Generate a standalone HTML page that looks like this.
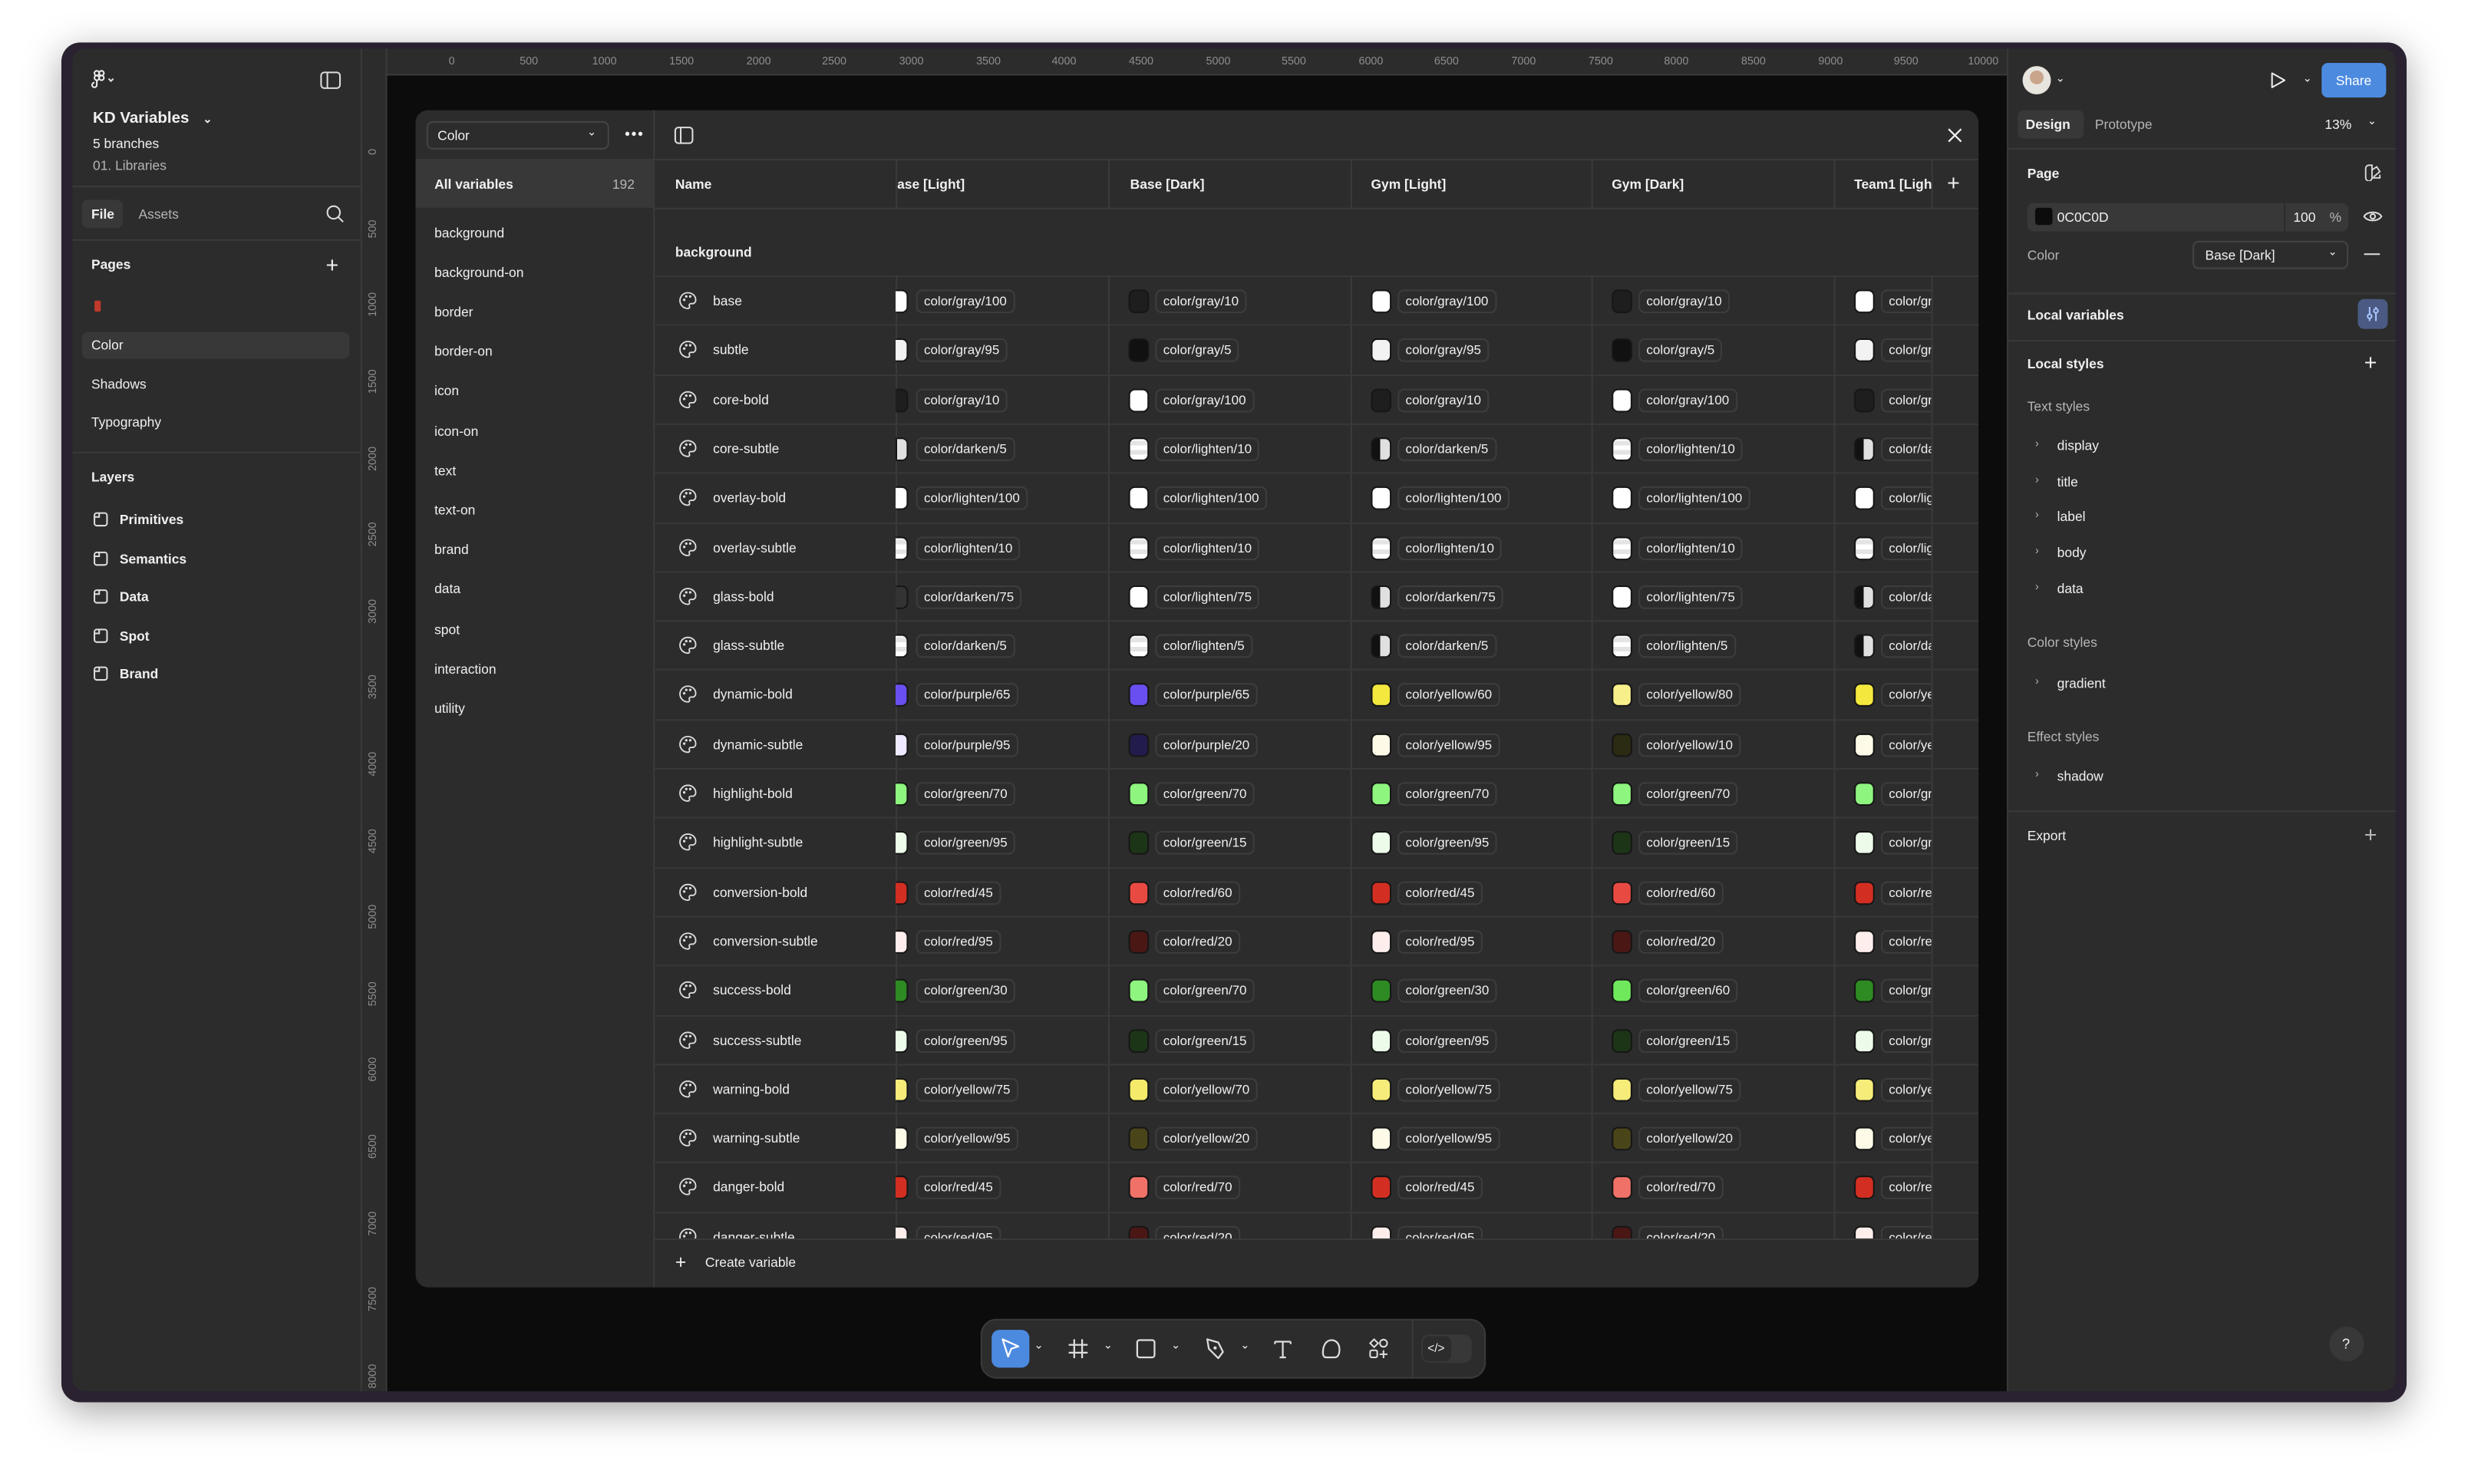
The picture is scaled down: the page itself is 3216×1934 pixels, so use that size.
<!DOCTYPE html>
<html><head><meta charset="utf-8">
<style>
*{margin:0;padding:0;box-sizing:border-box}
html,body{width:3216px;height:1934px;overflow:hidden;background:#fff}
#st{position:absolute;left:0;top:0;width:1568px;height:943px;transform:scale(2.05102);transform-origin:0 0;font-family:"Liberation Sans",sans-serif;color:#f0f0f0;font-size:8.5px}
.a{position:absolute}
.t{position:absolute;white-space:nowrap;line-height:10px;transform:translateY(-5px)}
.b{font-weight:bold}
.g{color:#b5b5b5}
.win{left:39px;top:27px;width:1490px;height:864px;background:#2a2230;border-radius:12px;box-shadow:0 6px 24px rgba(0,0,0,.35)}
.pan{background:#2c2c2c}
.sep{position:absolute;height:1px;background:#3a3a3a}
.rh{position:absolute;top:0;font-size:7px;color:#8d8d8d;transform:translateX(-50%);line-height:17px}
.rv{position:absolute;left:229px;width:17px;font-size:7px;color:#8d8d8d;text-align:center}
.rv span{display:block;transform:rotate(-90deg);white-space:nowrap}
#md{left:264px;top:70px;width:993px;height:748px;background:#2c2c2c;border-radius:8px;overflow:hidden}
.vl{position:absolute;top:105px;width:1px;height:612px;background:#3a3a3a}
.vh{position:absolute;top:31px;width:1px;height:31px;background:#3a3a3a}
.r{position:absolute;left:152px;width:841px;height:31.3px;border-top:1px solid #383838}
.r .n{position:absolute;left:37px;top:15px;transform:translateY(-5px);line-height:10px}
.r svg.p{position:absolute;left:15px;top:9px}
.c{position:absolute;top:0;height:31px;overflow:hidden}
.c1{left:153px;width:135px}.c2{left:288px;width:154px}.c3{left:442px;width:153px}.c4{left:595px;width:154px}.c5{left:749px;width:62px}
.c b{position:absolute;left:14px;top:9px;width:11px;height:13px;border-radius:3px;box-shadow:0 0 0 1px rgba(0,0,0,.5)}
.c u{position:absolute;left:30px;top:8px;height:15px;padding:0 4px;border:1px solid #3d3d3d;border-radius:4px;text-decoration:none;line-height:13px;white-space:nowrap;font-size:8.3px}
.c1 b{left:-4px}.c1 u{left:13px}
.dk{background:linear-gradient(90deg,#111 45%,#e0e0e0 45%)!important}
.lt{background:repeating-linear-gradient(0deg,#fff 0 3px,#e4e4e4 3px 6px)!important}
.li{position:absolute;left:12px;font-size:8.5px;line-height:10px;transform:translateY(-5px)}
.lay svg{position:absolute;left:59px}
</style></head><body>
<div id="st">
<div class="a win"></div>
<!-- left panel -->
<div class="a pan" style="left:46px;top:31px;width:183px;height:853px;border-radius:8px 0 0 8px"></div>
<svg class="a" style="left:58px;top:44px" width="16" height="14" viewBox="0 0 16 14"><g fill="none" stroke="#eee" stroke-width="1"><rect x="2" y="1" width="3" height="3" rx="1.5"/><rect x="5" y="1" width="3" height="3" rx="1.5"/><circle cx="3.5" cy="5.5" r="1.5"/><circle cx="6.5" cy="5.5" r="1.5"/><path d="M3.5 7v3a1.5 1.5 0 1 1-1.5-1.5"/></g><path d="M11 6l1.5 1.5L14 6" stroke="#ddd" fill="none"/></svg>
<svg class="a" style="left:203px;top:45px" width="14" height="12"><rect x="1" y="1" width="12" height="10" rx="2" fill="none" stroke="#ddd"/><line x1="5" y1="1" x2="5" y2="11" stroke="#ddd"/></svg>
<div class="t b" style="left:59px;top:76px;font-size:10px">KD Variables <span style="font-size:7px;margin-left:6px">⌄</span></div>
<div class="t" style="left:59px;top:91px">5 branches</div>
<div class="t g" style="left:59px;top:105px">01. Libraries</div>
<div class="sep" style="left:46px;top:118px;width:183px"></div>
<div class="a" style="left:52px;top:127px;width:26px;height:18px;background:#383838;border-radius:4px"></div>
<div class="t b" style="left:58px;top:136px">File</div>
<div class="t g" style="left:88px;top:136px">Assets</div>
<svg class="a" style="left:207px;top:130px" width="12" height="12"><circle cx="5" cy="5" r="4" fill="none" stroke="#ddd"/><line x1="8" y1="8" x2="11" y2="11" stroke="#ddd"/></svg>
<div class="sep" style="left:46px;top:152px;width:183px"></div>
<div class="t b" style="left:58px;top:168px">Pages</div>
<div class="t" style="left:207px;top:168px;font-size:14px">+</div>
<div class="a" style="left:60px;top:191px;width:4px;height:7px;background:#c0392b;border-radius:1px"></div>
<div class="a" style="left:52px;top:211px;width:170px;height:17px;background:#383838;border-radius:4px"></div>
<div class="t" style="left:58px;top:219px">Color</div>
<div class="t" style="left:58px;top:244px">Shadows</div>
<div class="t" style="left:58px;top:268px">Typography</div>
<div class="sep" style="left:46px;top:287px;width:183px"></div>
<div class="t b" style="left:58px;top:303px">Layers</div>
<div class="lay">
<svg style="top:325px" width="10" height="10"><rect x="1" y="1" width="8" height="8" rx="1.5" fill="none" stroke="#ddd"/><path d="M1 3.5h3V1" fill="none" stroke="#ddd"/></svg>
<svg style="top:350px" width="10" height="10"><rect x="1" y="1" width="8" height="8" rx="1.5" fill="none" stroke="#ddd"/><path d="M1 3.5h3V1" fill="none" stroke="#ddd"/></svg>
<svg style="top:374px" width="10" height="10"><rect x="1" y="1" width="8" height="8" rx="1.5" fill="none" stroke="#ddd"/><path d="M1 3.5h3V1" fill="none" stroke="#ddd"/></svg>
<svg style="top:399px" width="10" height="10"><rect x="1" y="1" width="8" height="8" rx="1.5" fill="none" stroke="#ddd"/><path d="M1 3.5h3V1" fill="none" stroke="#ddd"/></svg>
<svg style="top:423px" width="10" height="10"><rect x="1" y="1" width="8" height="8" rx="1.5" fill="none" stroke="#ddd"/><path d="M1 3.5h3V1" fill="none" stroke="#ddd"/></svg>
</div>
<div class="t b" style="left:76px;top:330px">Primitives</div>
<div class="t b" style="left:76px;top:355px">Semantics</div>
<div class="t b" style="left:76px;top:379px">Data</div>
<div class="t b" style="left:76px;top:404px">Spot</div>
<div class="t b" style="left:76px;top:428px">Brand</div>

<!-- rulers & canvas -->
<div class="a pan" style="left:229px;top:31px;width:1046px;height:17px;border-bottom:1px solid #3a3a3a"></div>
<div class="a pan" style="left:229px;top:31px;width:17px;height:853px;border-right:1px solid #3a3a3a;border-left:1px solid #3a3a3a"></div>
<div class="a" style="left:246px;top:48px;width:1029px;height:836px;background:#0c0c0d"></div>
<div class="a" style="left:0;top:31px">
<div class="rh" style="left:287px">0</div><div class="rh" style="left:336px">500</div><div class="rh" style="left:384px">1000</div><div class="rh" style="left:433px">1500</div><div class="rh" style="left:482px">2000</div><div class="rh" style="left:530px">2500</div><div class="rh" style="left:579px">3000</div><div class="rh" style="left:628px">3500</div><div class="rh" style="left:676px">4000</div><div class="rh" style="left:725px">4500</div><div class="rh" style="left:774px">5000</div><div class="rh" style="left:822px">5500</div><div class="rh" style="left:871px">6000</div><div class="rh" style="left:919px">6500</div><div class="rh" style="left:968px">7000</div><div class="rh" style="left:1017px">7500</div><div class="rh" style="left:1065px">8000</div><div class="rh" style="left:1114px">8500</div><div class="rh" style="left:1163px">9000</div><div class="rh" style="left:1211px">9500</div><div class="rh" style="left:1260px">10000</div>
</div>
<div class="rv" style="top:93px"><span>0</span></div><div class="rv" style="top:142px"><span>500</span></div><div class="rv" style="top:190px"><span>1000</span></div><div class="rv" style="top:239px"><span>1500</span></div><div class="rv" style="top:288px"><span>2000</span></div><div class="rv" style="top:336px"><span>2500</span></div><div class="rv" style="top:385px"><span>3000</span></div><div class="rv" style="top:433px"><span>3500</span></div><div class="rv" style="top:482px"><span>4000</span></div><div class="rv" style="top:531px"><span>4500</span></div><div class="rv" style="top:579px"><span>5000</span></div><div class="rv" style="top:628px"><span>5500</span></div><div class="rv" style="top:676px"><span>6000</span></div><div class="rv" style="top:725px"><span>6500</span></div><div class="rv" style="top:774px"><span>7000</span></div><div class="rv" style="top:822px"><span>7500</span></div><div class="rv" style="top:871px"><span>8000</span></div>

<!-- modal -->
<div class="a" id="md">
<div class="a" style="left:7px;top:7px;width:116px;height:18px;border:1px solid #444;border-radius:4px"></div>
<div class="t" style="left:14px;top:16px">Color</div>
<div class="t" style="left:109px;top:15px;font-size:7px">⌄</div>
<div class="t b" style="left:133px;top:15px;font-size:9px;letter-spacing:1px">•••</div>
<div class="a" style="left:151px;top:0;width:1px;height:748px;background:#3a3a3a"></div>
<svg class="a" style="left:164px;top:10px" width="13" height="12"><rect x="1" y="1" width="11" height="10" rx="2" fill="none" stroke="#ddd"/><line x1="4.5" y1="1" x2="4.5" y2="11" stroke="#ddd"/></svg>
<svg class="a" style="left:973px;top:11px" width="10" height="10"><path d="M1 1l8 8M9 1l-8 8" stroke="#eee" stroke-width="1.1"/></svg>
<div class="sep" style="left:0;top:31px;width:993px"></div>
<div class="a" style="left:0;top:31px;width:151px;height:31px;background:#383838"></div>
<div class="t b" style="left:12px;top:47px">All variables</div>
<div class="t g" style="left:125px;top:47px">192</div>
<div class="li" style="top:78px">background</div><div class="li" style="top:103px">background-on</div><div class="li" style="top:128px">border</div><div class="li" style="top:153px">border-on</div><div class="li" style="top:178px">icon</div><div class="li" style="top:204px">icon-on</div><div class="li" style="top:229px">text</div><div class="li" style="top:254px">text-on</div><div class="li" style="top:279px">brand</div><div class="li" style="top:304px">data</div><div class="li" style="top:330px">spot</div><div class="li" style="top:355px">interaction</div><div class="li" style="top:380px">utility</div>
<!-- header -->
<div class="sep" style="left:152px;top:62px;width:841px"></div>
<div class="t b" style="left:165px;top:47px">Name</div>
<div class="t b" style="left:306px;top:47px">ase [Light]</div>
<div class="t b" style="left:454px;top:47px">Base [Dark]</div>
<div class="t b" style="left:607px;top:47px">Gym [Light]</div>
<div class="t b" style="left:760px;top:47px">Gym [Dark]</div>
<div class="a" style="left:914px;top:31px;width:49px;height:31px;overflow:hidden"><div class="t b" style="left:0;top:16px">Team1 [Light]</div></div>
<div class="t" style="left:973px;top:46px;font-size:14px">+</div>
<div class="vh" style="left:305px"></div><div class="vh" style="left:440px"></div><div class="vh" style="left:594px"></div><div class="vh" style="left:747px"></div><div class="vh" style="left:901px"></div><div class="vh" style="left:963px"></div>
<div class="vl" style="left:305px"></div><div class="vl" style="left:440px"></div><div class="vl" style="left:594px"></div><div class="vl" style="left:747px"></div><div class="vl" style="left:901px"></div><div class="vl" style="left:963px"></div>
<div class="t b" style="left:165px;top:90px">background</div>
<div class="a" style="left:152px;top:0;width:841px;height:717px;overflow:hidden">
<div class="a" style="left:-152px;top:0;width:993px;height:717px">
<svg width="0" height="0" style="position:absolute"><defs><g id="pal"><path d="M6 1a5 5 0 0 0 0 10c1 0 1.3-.8 1-1.5-.4-.9.2-1.6 1-1.6H9.5A2.5 2.5 0 0 0 11 5.5C11 3 8.8 1 6 1z" fill="none" stroke="#ddd" stroke-width=".9"/><circle cx="3.7" cy="5.5" r=".8" fill="#ddd"/><circle cx="5" cy="3.4" r=".8" fill="#ddd"/><circle cx="7.5" cy="3.4" r=".8" fill="#ddd"/></g></defs></svg>

<div class="r" style="top:105px"><svg class="p" width="12" height="12"><use href="#pal"/></svg><span class="n">base</span>
<div class="c c1"><b style="background:#fff"></b><u>color/gray/100</u></div><div class="c c2"><b style="background:#1e1e1e"></b><u>color/gray/10</u></div><div class="c c3"><b style="background:#fff"></b><u>color/gray/100</u></div><div class="c c4"><b style="background:#1e1e1e"></b><u>color/gray/10</u></div><div class="c c5"><b style="background:#fff"></b><u>color/gray/100</u></div></div>

<div class="r" style="top:136.3px"><svg class="p" width="12" height="12"><use href="#pal"/></svg><span class="n">subtle</span>
<div class="c c1"><b style="background:#f2f2f2"></b><u>color/gray/95</u></div><div class="c c2"><b style="background:#111"></b><u>color/gray/5</u></div><div class="c c3"><b style="background:#f2f2f2"></b><u>color/gray/95</u></div><div class="c c4"><b style="background:#111"></b><u>color/gray/5</u></div><div class="c c5"><b style="background:#f2f2f2"></b><u>color/gray/95</u></div></div>

<div class="r" style="top:167.6px"><svg class="p" width="12" height="12"><use href="#pal"/></svg><span class="n">core-bold</span>
<div class="c c1"><b style="background:#1e1e1e"></b><u>color/gray/10</u></div><div class="c c2"><b style="background:#fff"></b><u>color/gray/100</u></div><div class="c c3"><b style="background:#1e1e1e"></b><u>color/gray/10</u></div><div class="c c4"><b style="background:#fff"></b><u>color/gray/100</u></div><div class="c c5"><b style="background:#1e1e1e"></b><u>color/gray/10</u></div></div>

<div class="r" style="top:198.9px"><svg class="p" width="12" height="12"><use href="#pal"/></svg><span class="n">core-subtle</span>
<div class="c c1"><b class="dk"></b><u>color/darken/5</u></div><div class="c c2"><b class="lt"></b><u>color/lighten/10</u></div><div class="c c3"><b class="dk"></b><u>color/darken/5</u></div><div class="c c4"><b class="lt"></b><u>color/lighten/10</u></div><div class="c c5"><b class="dk"></b><u>color/darken/5</u></div></div>

<div class="r" style="top:230.2px"><svg class="p" width="12" height="12"><use href="#pal"/></svg><span class="n">overlay-bold</span>
<div class="c c1"><b style="background:#fff"></b><u>color/lighten/100</u></div><div class="c c2"><b style="background:#fff"></b><u>color/lighten/100</u></div><div class="c c3"><b style="background:#fff"></b><u>color/lighten/100</u></div><div class="c c4"><b style="background:#fff"></b><u>color/lighten/100</u></div><div class="c c5"><b style="background:#fff"></b><u>color/lighten/100</u></div></div>

<div class="r" style="top:261.5px"><svg class="p" width="12" height="12"><use href="#pal"/></svg><span class="n">overlay-subtle</span>
<div class="c c1"><b class="lt"></b><u>color/lighten/10</u></div><div class="c c2"><b class="lt"></b><u>color/lighten/10</u></div><div class="c c3"><b class="lt"></b><u>color/lighten/10</u></div><div class="c c4"><b class="lt"></b><u>color/lighten/10</u></div><div class="c c5"><b class="lt"></b><u>color/lighten/10</u></div></div>

<div class="r" style="top:292.8px"><svg class="p" width="12" height="12"><use href="#pal"/></svg><span class="n">glass-bold</span>
<div class="c c1"><b style="background:#333"></b><u>color/darken/75</u></div><div class="c c2"><b style="background:#fff"></b><u>color/lighten/75</u></div><div class="c c3"><b class="dk"></b><u>color/darken/75</u></div><div class="c c4"><b style="background:#fff"></b><u>color/lighten/75</u></div><div class="c c5"><b class="dk"></b><u>color/darken/75</u></div></div>

<div class="r" style="top:324.1px"><svg class="p" width="12" height="12"><use href="#pal"/></svg><span class="n">glass-subtle</span>
<div class="c c1"><b class="lt"></b><u>color/darken/5</u></div><div class="c c2"><b class="lt"></b><u>color/lighten/5</u></div><div class="c c3"><b class="dk"></b><u>color/darken/5</u></div><div class="c c4"><b class="lt"></b><u>color/lighten/5</u></div><div class="c c5"><b class="dk"></b><u>color/darken/5</u></div></div>

<div class="r" style="top:355.4px"><svg class="p" width="12" height="12"><use href="#pal"/></svg><span class="n">dynamic-bold</span>
<div class="c c1"><b style="background:#6a4ff0"></b><u>color/purple/65</u></div><div class="c c2"><b style="background:#6a4ff0"></b><u>color/purple/65</u></div><div class="c c3"><b style="background:#f4e83e"></b><u>color/yellow/60</u></div><div class="c c4"><b style="background:#f7ef8a"></b><u>color/yellow/80</u></div><div class="c c5"><b style="background:#f4e83e"></b><u>color/yellow/60</u></div></div>

<div class="r" style="top:386.7px"><svg class="p" width="12" height="12"><use href="#pal"/></svg><span class="n">dynamic-subtle</span>
<div class="c c1"><b style="background:#efeaff"></b><u>color/purple/95</u></div><div class="c c2"><b style="background:#221c4d"></b><u>color/purple/20</u></div><div class="c c3"><b style="background:#fdfbe8"></b><u>color/yellow/95</u></div><div class="c c4"><b style="background:#2b2a12"></b><u>color/yellow/10</u></div><div class="c c5"><b style="background:#fdfbe8"></b><u>color/yellow/95</u></div></div>

<div class="r" style="top:418px"><svg class="p" width="12" height="12"><use href="#pal"/></svg><span class="n">highlight-bold</span>
<div class="c c1"><b style="background:#8ef57f"></b><u>color/green/70</u></div><div class="c c2"><b style="background:#8ef57f"></b><u>color/green/70</u></div><div class="c c3"><b style="background:#8ef57f"></b><u>color/green/70</u></div><div class="c c4"><b style="background:#8ef57f"></b><u>color/green/70</u></div><div class="c c5"><b style="background:#8ef57f"></b><u>color/green/70</u></div></div>

<div class="r" style="top:449.3px"><svg class="p" width="12" height="12"><use href="#pal"/></svg><span class="n">highlight-subtle</span>
<div class="c c1"><b style="background:#ecfbea"></b><u>color/green/95</u></div><div class="c c2"><b style="background:#1c3517"></b><u>color/green/15</u></div><div class="c c3"><b style="background:#ecfbea"></b><u>color/green/95</u></div><div class="c c4"><b style="background:#1c3517"></b><u>color/green/15</u></div><div class="c c5"><b style="background:#ecfbea"></b><u>color/green/95</u></div></div>

<div class="r" style="top:480.6px"><svg class="p" width="12" height="12"><use href="#pal"/></svg><span class="n">conversion-bold</span>
<div class="c c1"><b style="background:#d22f22"></b><u>color/red/45</u></div><div class="c c2"><b style="background:#e84a42"></b><u>color/red/60</u></div><div class="c c3"><b style="background:#d22f22"></b><u>color/red/45</u></div><div class="c c4"><b style="background:#e84a42"></b><u>color/red/60</u></div><div class="c c5"><b style="background:#d22f22"></b><u>color/red/45</u></div></div>

<div class="r" style="top:511.9px"><svg class="p" width="12" height="12"><use href="#pal"/></svg><span class="n">conversion-subtle</span>
<div class="c c1"><b style="background:#fdeeec"></b><u>color/red/95</u></div><div class="c c2"><b style="background:#4a1714"></b><u>color/red/20</u></div><div class="c c3"><b style="background:#fdeeec"></b><u>color/red/95</u></div><div class="c c4"><b style="background:#4a1714"></b><u>color/red/20</u></div><div class="c c5"><b style="background:#fdeeec"></b><u>color/red/95</u></div></div>

<div class="r" style="top:543.2px"><svg class="p" width="12" height="12"><use href="#pal"/></svg><span class="n">success-bold</span>
<div class="c c1"><b style="background:#2e8a22"></b><u>color/green/30</u></div><div class="c c2"><b style="background:#8ef57f"></b><u>color/green/70</u></div><div class="c c3"><b style="background:#2e8a22"></b><u>color/green/30</u></div><div class="c c4"><b style="background:#6fe85c"></b><u>color/green/60</u></div><div class="c c5"><b style="background:#2e8a22"></b><u>color/green/30</u></div></div>

<div class="r" style="top:574.5px"><svg class="p" width="12" height="12"><use href="#pal"/></svg><span class="n">success-subtle</span>
<div class="c c1"><b style="background:#ecfbea"></b><u>color/green/95</u></div><div class="c c2"><b style="background:#1c3517"></b><u>color/green/15</u></div><div class="c c3"><b style="background:#ecfbea"></b><u>color/green/95</u></div><div class="c c4"><b style="background:#1c3517"></b><u>color/green/15</u></div><div class="c c5"><b style="background:#ecfbea"></b><u>color/green/95</u></div></div>

<div class="r" style="top:605.8px"><svg class="p" width="12" height="12"><use href="#pal"/></svg><span class="n">warning-bold</span>
<div class="c c1"><b style="background:#f6ec7a"></b><u>color/yellow/75</u></div><div class="c c2"><b style="background:#f5ea6a"></b><u>color/yellow/70</u></div><div class="c c3"><b style="background:#f6ec7a"></b><u>color/yellow/75</u></div><div class="c c4"><b style="background:#f6ec7a"></b><u>color/yellow/75</u></div><div class="c c5"><b style="background:#f6ec7a"></b><u>color/yellow/75</u></div></div>

<div class="r" style="top:637.1px"><svg class="p" width="12" height="12"><use href="#pal"/></svg><span class="n">warning-subtle</span>
<div class="c c1"><b style="background:#fdfbe8"></b><u>color/yellow/95</u></div><div class="c c2"><b style="background:#4a4519"></b><u>color/yellow/20</u></div><div class="c c3"><b style="background:#fdfbe8"></b><u>color/yellow/95</u></div><div class="c c4"><b style="background:#4a4519"></b><u>color/yellow/20</u></div><div class="c c5"><b style="background:#fdfbe8"></b><u>color/yellow/95</u></div></div>

<div class="r" style="top:668.4px"><svg class="p" width="12" height="12"><use href="#pal"/></svg><span class="n">danger-bold</span>
<div class="c c1"><b style="background:#d22f22"></b><u>color/red/45</u></div><div class="c c2"><b style="background:#f07167"></b><u>color/red/70</u></div><div class="c c3"><b style="background:#d22f22"></b><u>color/red/45</u></div><div class="c c4"><b style="background:#f07167"></b><u>color/red/70</u></div><div class="c c5"><b style="background:#d22f22"></b><u>color/red/45</u></div></div>

<div class="r" style="top:699.7px"><svg class="p" width="12" height="12"><use href="#pal"/></svg><span class="n">danger-subtle</span>
<div class="c c1"><b style="background:#fdeeec"></b><u>color/red/95</u></div><div class="c c2"><b style="background:#4a1714"></b><u>color/red/20</u></div><div class="c c3"><b style="background:#fdeeec"></b><u>color/red/95</u></div><div class="c c4"><b style="background:#4a1714"></b><u>color/red/20</u></div><div class="c c5"><b style="background:#fdeeec"></b><u>color/red/95</u></div></div>
</div></div>
<div class="a" style="left:152px;top:717px;width:841px;height:31px;background:#2c2c2c;border-top:1px solid #3a3a3a"></div>
<div class="t" style="left:165px;top:732px;font-size:12px">+</div>
<div class="t" style="left:184px;top:732px">Create variable</div>
</div>

<!-- toolbar -->
<div class="a" style="left:623px;top:838px;width:321px;height:38px;background:#2c2c2c;border:1px solid #3a3a3a;border-radius:10px"></div>
<div class="a" style="left:630px;top:845px;width:24px;height:24px;background:#4c8ae0;border-radius:5px"></div>
<svg class="a" style="left:634px;top:849px" width="16" height="16"><path d="M3 2l10 4.5-4.5 1.5-2 5z" fill="none" stroke="#fff" stroke-width="1.1" stroke-linejoin="round"/></svg>
<div class="t" style="left:657px;top:856px;font-size:7px">⌄</div>
<svg class="a" style="left:678px;top:850px" width="14" height="14"><path d="M4.5 1v12M9.5 1v12M1 4.5h12M1 9.5h12" stroke="#ddd" stroke-width="1.1"/></svg>
<div class="t" style="left:701px;top:856px;font-size:7px">⌄</div>
<svg class="a" style="left:721px;top:850px" width="14" height="14"><rect x="1.5" y="1.5" width="11" height="11" rx="1.5" fill="none" stroke="#ddd" stroke-width="1.1"/></svg>
<div class="t" style="left:744px;top:856px;font-size:7px">⌄</div>
<svg class="a" style="left:765px;top:849px" width="15" height="16"><path d="M2 2l7 2 3 6-3 4-3-3-3-3z" fill="none" stroke="#ddd" stroke-width="1.1" stroke-linejoin="round"/><circle cx="7" cy="7.5" r="1" fill="#ddd"/></svg>
<div class="t" style="left:788px;top:856px;font-size:7px">⌄</div>
<svg class="a" style="left:808px;top:850px" width="14" height="14"><path d="M2 2.5h10M7 2.5v10M5 12.5h4M2 2.5v1.5M12 2.5v1.5" stroke="#ddd" stroke-width="1.1" fill="none"/></svg>
<svg class="a" style="left:839px;top:850px" width="14" height="14"><path d="M7 1.5c3 0 5 2.5 5 6 0 3-1 5-3 5H3.5c-1.5 0-2-1.5-2-3C1.5 5 3.5 1.5 7 1.5z" fill="none" stroke="#ddd" stroke-width="1.1"/></svg>
<svg class="a" style="left:869px;top:850px" width="14" height="14"><path d="M4 1l2.5 2.5L4 6 1.5 3.5z" fill="none" stroke="#ddd"/><circle cx="10" cy="3.5" r="2.3" fill="none" stroke="#ddd"/><rect x="1.5" y="8" width="4.5" height="4.5" rx="1" fill="none" stroke="#ddd"/><path d="M10 8v5M7.5 10.5h5" stroke="#ddd"/></svg>
<div class="a" style="left:897px;top:839px;width:1px;height:36px;background:#3a3a3a"></div>
<div class="a" style="left:903px;top:848px;width:32px;height:18px;background:#383838;border-radius:5px"></div>
<div class="a" style="left:904px;top:849px;width:18px;height:16px;background:#2c2c2c;border-radius:4px"></div>
<div class="t" style="left:907px;top:857px;font-size:7.5px">&lt;/&gt;</div>

<!-- right panel -->
<div class="a pan" style="left:1275px;top:31px;width:247px;height:853px;border-left:1px solid #3a3a3a;border-radius:0 8px 8px 0"></div>
<div class="a" style="left:1285px;top:42px;width:18px;height:18px;border-radius:50%;background:radial-gradient(circle at 50% 40%,#c9a58c 0 30%,#e8e4de 32%)"></div>
<div class="t" style="left:1306px;top:51px;font-size:7px">⌄</div>
<svg class="a" style="left:1441px;top:45px" width="12" height="12"><path d="M2.5 1.5l8 4.5-8 4.5z" fill="none" stroke="#eee" stroke-linejoin="round"/></svg>
<div class="t" style="left:1463px;top:51px;font-size:7px">⌄</div>
<div class="a" style="left:1475px;top:40px;width:41px;height:22px;background:#4c8ae0;border-radius:4px"></div>
<div class="t" style="left:1484px;top:51px;color:#fff">Share</div>
<div class="a" style="left:1282px;top:70px;width:42px;height:18px;background:#383838;border-radius:4px"></div>
<div class="t b" style="left:1287px;top:79px">Design</div>
<div class="t g" style="left:1331px;top:79px">Prototype</div>
<div class="t" style="left:1477px;top:79px">13%</div>
<div class="t" style="left:1504px;top:78px;font-size:7px">⌄</div>
<div class="sep" style="left:1276px;top:94px;width:246px"></div>
<div class="t b" style="left:1288px;top:110px">Page</div>
<svg class="a" style="left:1502px;top:104px" width="11" height="11"><path d="M3 1h2v8a2 2 0 0 1-4 0V3a2 2 0 0 1 2-2zM5 4l3-2 2 3-4 3.5M5 9h5V7" fill="none" stroke="#ddd" stroke-width=".9"/></svg>
<div class="a" style="left:1288px;top:129px;width:204px;height:18px;background:#383838;border-radius:4px"></div>
<div class="a" style="left:1293px;top:132px;width:11px;height:11px;background:#0c0c0d;border-radius:2px"></div>
<div class="t" style="left:1307px;top:138px">0C0C0D</div>
<div class="a" style="left:1451px;top:129px;width:1px;height:18px;background:#2c2c2c"></div>
<div class="t" style="left:1457px;top:138px">100</div>
<div class="t g" style="left:1480px;top:138px">%</div>
<svg class="a" style="left:1501px;top:132px" width="13" height="11"><path d="M1 5.5C3 2 10 2 12 5.5 10 9 3 9 1 5.5z" fill="none" stroke="#ddd"/><circle cx="6.5" cy="5.5" r="1.5" fill="none" stroke="#ddd"/></svg>
<div class="t g" style="left:1288px;top:162px">Color</div>
<div class="a" style="left:1393px;top:153px;width:99px;height:18px;border:1px solid #444;border-radius:4px"></div>
<div class="t" style="left:1401px;top:162px">Base [Dark]</div>
<div class="t" style="left:1479px;top:161px;font-size:7px">⌄</div>
<div class="a" style="left:1502px;top:161px;width:10px;height:1px;background:#ddd"></div>
<div class="sep" style="left:1276px;top:186px;width:246px"></div>
<div class="t b" style="left:1288px;top:200px">Local variables</div>
<div class="a" style="left:1498px;top:190px;width:19px;height:19px;background:#4a5a82;border-radius:4px"></div>
<svg class="a" style="left:1502px;top:194px" width="11" height="11"><path d="M3.5 1v9M7.5 1v9" stroke="#aac4ff"/><circle cx="3.5" cy="7" r="1.3" fill="#4a5a82" stroke="#aac4ff"/><circle cx="7.5" cy="3.5" r="1.3" fill="#4a5a82" stroke="#aac4ff"/></svg>
<div class="sep" style="left:1276px;top:216px;width:246px"></div>
<div class="t b" style="left:1288px;top:231px">Local styles</div>
<div class="t" style="left:1502px;top:230px;font-size:14px">+</div>
<div class="t g" style="left:1288px;top:258px">Text styles</div>
<div class="t g" style="left:1293px;top:283px;font-size:7px">›</div><div class="t" style="left:1307px;top:283px">display</div>
<div class="t g" style="left:1293px;top:306px;font-size:7px">›</div><div class="t" style="left:1307px;top:306px">title</div>
<div class="t g" style="left:1293px;top:328px;font-size:7px">›</div><div class="t" style="left:1307px;top:328px">label</div>
<div class="t g" style="left:1293px;top:351px;font-size:7px">›</div><div class="t" style="left:1307px;top:351px">body</div>
<div class="t g" style="left:1293px;top:374px;font-size:7px">›</div><div class="t" style="left:1307px;top:374px">data</div>
<div class="t g" style="left:1288px;top:408px">Color styles</div>
<div class="t g" style="left:1293px;top:434px;font-size:7px">›</div><div class="t" style="left:1307px;top:434px">gradient</div>
<div class="t g" style="left:1288px;top:468px">Effect styles</div>
<div class="t g" style="left:1293px;top:493px;font-size:7px">›</div><div class="t" style="left:1307px;top:493px">shadow</div>
<div class="sep" style="left:1276px;top:515px;width:246px"></div>
<div class="t" style="left:1288px;top:531px">Export</div>
<div class="t g" style="left:1502px;top:530px;font-size:14px">+</div>
<div class="a" style="left:1480px;top:843px;width:22px;height:22px;border-radius:50%;background:#383838"></div>
<div class="t" style="left:1488px;top:854px;font-size:9px">?</div>
</div>
</body></html>
